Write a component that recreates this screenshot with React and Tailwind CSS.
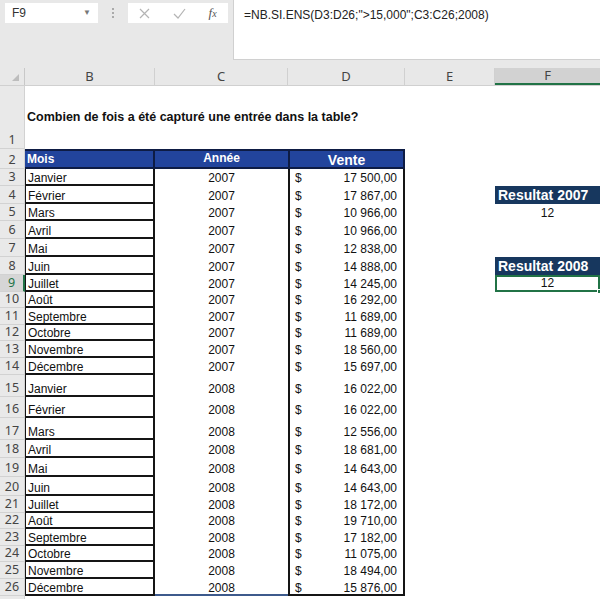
import React from 'react';

const mois = ['Janvier', 'Février', 'Mars', 'Avril', 'Mai', 'Juin', 'Juillet', 'Août', 'Septembre', 'Octobre', 'Novembre', 'Décembre'];

const ventes2007 = ['17 500,00', '17 867,00', '10 966,00', '10 966,00', '12 838,00', '14 888,00', '14 245,00', '16 292,00', '11 689,00', '11 689,00', '18 560,00', '15 697,00'];
const ventes2008 = ['16 022,00', '16 022,00', '12 556,00', '18 681,00', '14 643,00', '14 643,00', '18 172,00', '19 710,00', '17 182,00', '11 075,00', '18 494,00', '15 876,00'];

const lignes = [
  ...mois.map((m, i) => ({ mois: m, annee: 2007, vente: ventes2007[i] })),
  ...mois.map((m, i) => ({ mois: m, annee: 2008, vente: ventes2008[i] })),
];

const RowNum = ({ n, active }) => (
  <div
    className={`flex items-end justify-center pb-px border-b border-r border-[#d2d2d2] text-[12.5px] leading-none font-['Noto_Sans',sans-serif] ${
      active ? 'bg-[#d6d6d6] text-[#217346] border-r-[#217346] border-r-2' : 'bg-[#e9e9e9] text-[#444]'
    }`}
  >
    <span className="mb-px">{n}</span>
  </div>
);

const ColonneF = ({ row }) => {
  if (row === 4 || row === 8) {
    return (
      <div className="flex items-end bg-[#17375e] text-white font-bold text-[14px] leading-none pl-[3px] pb-[2px]">
        Resultat {row === 4 ? 2007 : 2008}
      </div>
    );
  }
  if (row === 5) {
    return <div className="flex items-end justify-center pb-[2px] text-[12px] leading-none">12</div>;
  }
  if (row === 9) {
    return (
      <div className="relative flex items-end justify-center pb-px text-[12px] leading-none border-2 border-[#217346]">
        12
        <span className="absolute -right-[4px] -bottom-[4px] w-[5px] h-[5px] bg-[#217346] border border-white" />
      </div>
    );
  }
  return <div />;
};

export default function App() {
  return (
    <div className="w-[600px] h-[599px] overflow-hidden bg-white font-['Liberation_Sans',Arial,sans-serif] text-[#111]">
      {/* barre de formule */}
      <div className="h-[68px] bg-[#e8e8e8] flex items-start">
        <div className="flex items-center pl-[5px] pt-[3px] w-[233px]">
          <div className="w-[93px] h-[20px] bg-white flex items-center justify-between px-[7px] text-[12px] text-[#333]">
            <span>F9</span>
            <span className="text-[8px] text-[#777]">▼</span>
          </div>
          <div className="w-[30px] flex flex-col items-center gap-[2px]">
            <span className="w-[2px] h-[2px] bg-[#aaa]" />
            <span className="w-[2px] h-[2px] bg-[#aaa]" />
            <span className="w-[2px] h-[2px] bg-[#aaa]" />
          </div>
          <div className="w-[100px] h-[20px] bg-white flex items-center justify-around text-[#b4b4b4]">
            <svg width="11" height="11" viewBox="0 0 11 11" stroke="currentColor" strokeWidth="1.2" fill="none">
              <path d="M1 1 L10 10 M10 1 L1 10" />
            </svg>
            <svg width="13" height="11" viewBox="0 0 13 11" stroke="currentColor" strokeWidth="1.2" fill="none">
              <path d="M1 6 L5 10 L12 1" />
            </svg>
            <span className="font-['Liberation_Serif',serif] italic text-[13px] text-[#555]">
              f<span className="text-[10px]">x</span>
            </span>
          </div>
        </div>
        <div className="flex-1 h-[60px] bg-white border-l border-b border-[#d0d0d0] pl-[10px] pt-[6px] text-[12px] text-[#222]">
          =NB.SI.ENS(D3:D26;"&gt;15,000";C3:C26;2008)
        </div>
      </div>

      {/* en-têtes de colonnes */}
      <div className="grid grid-cols-[25px_130px_133px_117px_90px_105px] h-[18px] bg-[#e8e8e8] text-[13px] text-[#444] font-['Noto_Sans',sans-serif] leading-none border-b border-[#d0d0d0]">
        <div className="relative border-r border-[#c8c8c8]">
          <span className="absolute right-[5px] bottom-[4px] w-0 h-0 border-l-[7px] border-l-transparent border-b-[7px] border-b-[#bdbdbd]" />
        </div>
        <div className="flex items-end justify-center pb-[2px] border-r border-[#d0d0d0]">B</div>
        <div className="flex items-end justify-center pb-[2px] border-r border-[#d0d0d0]">C</div>
        <div className="flex items-end justify-center pb-[2px] border-r border-[#d0d0d0]">D</div>
        <div className="flex items-end justify-center pb-[2px] border-r border-[#d0d0d0]">E</div>
        <div className="flex items-end justify-center pb-[1px] bg-[#d2d2d2] border-b-2 border-[#217346]">F</div>
      </div>

      {/* feuille */}
      <div className="grid grid-cols-[25px_130px_133px_117px_90px_105px] grid-rows-[63px_20px_17px_18px_17px_18px_18px_18px_17px_16px_17px_16px_17px_17px_22px_21px_22px_18px_19px_19px_17px_16px_17px_16px_17px_17px_17px] text-[12px] leading-none">
        {/* ligne 1 */}
        <RowNum n={1} />
        <div className="col-span-5 flex items-center pl-[2px] font-bold text-[12.5px]">
          Combien de fois a été capturé une entrée dans la table?
        </div>

        {/* ligne 2 : en-tête du tableau */}
        <RowNum n={2} />
        <div className="flex items-center pl-[2px] bg-[#22449c] text-white font-bold border-t-2 border-b-2 border-r-2 border-[#0e1c44]">
          Mois
        </div>
        <div className="flex items-center justify-center bg-[#22449c] text-white font-bold border-t-2 border-b-2 border-[#0e1c44] pb-[2px]">
          Année
        </div>
        <div className="flex items-end justify-center bg-[#22449c] text-white font-bold text-[14px] border-2 border-[#0e1c44]">
          Vente
        </div>
        <div />
        <div />

        {lignes.map((l, i) => {
          const row = i + 3;
          const dernier = row === 26;
          return (
            <React.Fragment key={row}>
              <RowNum n={row} active={row === 9} />
              <div className="flex items-end pl-[2px] border-l border-b-2 border-r-2 border-[#151515]">
                {l.mois}
              </div>
              <div
                className={`flex items-end justify-center ${dernier ? 'border-b-2 border-[#3d5a8c]' : 'pb-[2px]'}`}
              >
                {l.annee}
              </div>
              <div
                className={`flex items-end justify-between pl-[5px] pr-[6px] border-l-2 border-r-2 border-[#151515] ${
                  dernier ? 'border-b-2' : 'pb-[2px]'
                }`}
              >
                <span>$</span>
                <span>{l.vente}</span>
              </div>
              <div />
              <ColonneF row={row} />
            </React.Fragment>
          );
        })}

        <div className="bg-[#e9e9e9] border-r border-[#d2d2d2]" />
        <div className="col-span-5" />
      </div>
    </div>
  );
}
